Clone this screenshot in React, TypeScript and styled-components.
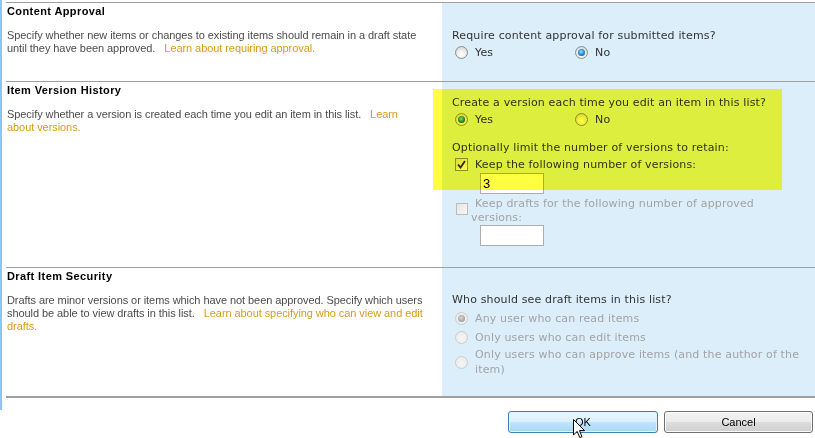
import React from "react";
import styled, { createGlobalStyle, css } from "styled-components";

const GlobalStyle = createGlobalStyle`
  html, body {
    margin: 0;
    padding: 0;
    background: #fff;
  }
  body {
    font-family: "Liberation Sans", Arial, sans-serif;
    font-size: 11px;
  }
`;

const Root = styled.div`
  position: relative;
  width: 815px;
  height: 438px;
  overflow: hidden;
`;

const Page = styled.div`
  border-left: 2px solid #86c6f9;
  padding: 2px 0 12px 4px;
`;

const Sections = styled.div`
  border-bottom: 2px solid #a0a0a0;
`;

const Section = styled.div<{ $h: number }>`
  display: flex;
  border-top: 1px solid #a0a0a0;
  height: ${(p) => p.$h}px;
`;

const Left = styled.div`
  width: 420px;
  padding: 2px 15px 0 1px;
`;

const Title = styled.div`
  font-weight: bold;
  line-height: 13px;
  letter-spacing: 0.4px;
  color: #000;
`;

const Desc = styled.div`
  margin-top: 11px;
  line-height: 13px;
  letter-spacing: -0.07px;
  color: #4c4c4c;
`;

const Link = styled.span`
  color: #d69d19;
`;

const Right = styled.div<{ $pt: number }>`
  flex: 1;
  background: #ddeefb;
  padding: ${(p) => p.$pt}px 0 0 10px;
  font-family: "DejaVu Sans", Verdana, sans-serif;
  font-size: 11px;
  letter-spacing: 0.15px;
  color: #333;
`;

const Question = styled.div<{ $mt?: number }>`
  line-height: 14px;
  margin-top: ${(p) => p.$mt ?? 0}px;
`;

const Options = styled.div`
  display: flex;
  height: 18px;
  align-items: center;
`;

const Option = styled.div`
  display: flex;
  align-items: center;
  width: 120px;
`;

const OptionList = styled.div`
  margin-top: 2px;
  color: #a3a3a3;
`;

const ListOption = styled.div`
  display: flex;
  align-items: center;
  min-height: 19px;
  line-height: 15px;
`;

const OptionText = styled.span`
  max-width: 335px;
`;

const Radio = styled.span<{ $checked?: boolean; $disabled?: boolean }>`
  position: relative;
  flex: none;
  box-sizing: border-box;
  width: 13px;
  height: 13px;
  margin: 0 7px 0 3px;
  border-radius: 50%;
  border: 1px solid ${(p) => (p.$disabled ? "#c9cdd1" : "#8e8f8f")};
  background: ${(p) =>
    p.$disabled
      ? "radial-gradient(circle at 50% 60%, #f6f6f6 0, #e8e8e8 100%)"
      : "radial-gradient(circle at 50% 65%, #ffffff 0, #f0f0f0 40%, #c9c9c9 100%)"};
  ${(p) =>
    p.$checked &&
    css`
      &::after {
        content: "";
        position: absolute;
        left: 2px;
        top: 2px;
        width: 7px;
        height: 7px;
        border-radius: 50%;
        background: ${p.$disabled
          ? "radial-gradient(circle at 45% 40%, #d8d8d8 0, #a8a8a8 60%, #8a8a8a 100%)"
          : "radial-gradient(circle at 45% 40%, #8fe0ff 0, #2a97dc 45%, #0b3b66 100%)"};
      }
    `}
`;

const CheckRow = styled.div`
  display: flex;
  align-items: center;
  height: 18px;
`;

const Checkbox = styled.span<{ $disabled?: boolean }>`
  flex: none;
  box-sizing: border-box;
  display: flex;
  align-items: center;
  justify-content: center;
  width: 13px;
  height: 13px;
  margin: 0 7px 0 3px;
  border: 1px solid ${(p) => (p.$disabled ? "#bcbcbc" : "#8e8f8f")};
  background: ${(p) =>
    p.$disabled
      ? "linear-gradient(135deg, #e6e6e6, #f7f7f7)"
      : "linear-gradient(135deg, #dcdcdc, #ffffff)"};
`;

const DisabledRow = styled.div`
  display: flex;
  align-items: flex-start;
  margin-top: 3px;
  color: #a3a3a3;
`;

const DisabledBox = styled(Checkbox)`
  width: 12px;
  height: 12px;
  margin: 6px 3px 0 4px;
`;

const DisabledLabel = styled.div`
  width: 300px;
  line-height: 14px;
  text-indent: 4px;
`;

const TextBox = styled.input`
  display: block;
  box-sizing: border-box;
  width: 64px;
  height: 21px;
  margin: 0 0 0 28px;
  padding: 0 0 0 2px;
  border: 1px solid #abadb3;
  background: #fff;
  font-family: "Liberation Sans", Arial, sans-serif;
  font-size: 13px;
  color: #000;
  outline: none;
`;

const Highlight = styled.div`
  position: absolute;
  left: 433px;
  top: 89px;
  width: 349px;
  height: 101px;
  background: rgba(255, 255, 0, 0.75);
  mix-blend-mode: multiply;
  pointer-events: none;
`;

const Footer = styled.div`
  display: flex;
  justify-content: flex-end;
  gap: 6px;
  padding: 1px 2px 0 0;
`;

const Button = styled.button<{ $primary?: boolean; $w: number }>`
  width: ${(p) => p.$w}px;
  height: 22px;
  border-radius: 3px;
  font-family: "Liberation Sans", Arial, sans-serif;
  font-size: 11px;
  color: #000;
  padding: 0;
  ${(p) =>
    p.$primary
      ? css`
          border: 1px solid #3c7fb1;
          background: linear-gradient(#eaf6fd 0%, #d9f0fc 50%, #bee6fd 51%, #a7d9f5 100%);
          box-shadow: inset 0 0 0 1px #e4f3fc;
        `
      : css`
          border: 1px solid #707070;
          background: linear-gradient(#f2f2f2 0%, #ebebeb 50%, #dddddd 51%, #cfcfcf 100%);
          box-shadow: inset 0 0 0 1px #fbfbfb;
        `}
`;

const Cursor = styled.svg`
  position: absolute;
  left: 573px;
  top: 419px;
`;

const Check = () => (
  <svg width="9" height="9" viewBox="0 0 9 9">
    <path d="M1 4.5 L3.5 7.5 L8 1" fill="none" stroke="#2b2b2b" strokeWidth="1.8" />
  </svg>
);

const gap = "\u00a0\u00a0 ";

export default function App() {
  return (
    <Root>
      <GlobalStyle />
      <Page>
        <Sections>
          <Section $h={78}>
            <Left>
              <Title>Content Approval</Title>
              <Desc>
                Specify whether new items or changes to existing items should remain in a draft state
                until they have been approved.{gap}
                <Link>Learn about requiring approval.</Link>
              </Desc>
            </Left>
            <Right $pt={26}>
              <Question>Require content approval for submitted items?</Question>
              <Options>
                <Option>
                  <Radio />
                  Yes
                </Option>
                <Option>
                  <Radio $checked />
                  No
                </Option>
              </Options>
            </Right>
          </Section>

          <Section $h={185}>
            <Left>
              <Title>Item Version History</Title>
              <Desc>
                Specify whether a version is created each time you edit an item in this list.{gap}
                <Link>Learn about versions.</Link>
              </Desc>
            </Left>
            <Right $pt={14}>
              <Question>Create a version each time you edit an item in this list?</Question>
              <Options>
                <Option>
                  <Radio $checked />
                  Yes
                </Option>
                <Option>
                  <Radio />
                  No
                </Option>
              </Options>
              <Question $mt={13}>Optionally limit the number of versions to retain:</Question>
              <CheckRow>
                <Checkbox>
                  <Check />
                </Checkbox>
                Keep the following number of versions:
              </CheckRow>
              <TextBox readOnly value="3" />
              <DisabledRow>
                <DisabledBox $disabled />
                <DisabledLabel>Keep drafts for the following number of approved versions:</DisabledLabel>
              </DisabledRow>
              <TextBox readOnly value="" />
            </Right>
          </Section>

          <Section $h={128}>
            <Left>
              <Title>Draft Item Security</Title>
              <Desc>
                Drafts are minor versions or items which have not been approved. Specify which users
                should be able to view drafts in this list.{gap}
                <Link>Learn about specifying who can view and edit drafts.</Link>
              </Desc>
            </Left>
            <Right $pt={25}>
              <Question>Who should see draft items in this list?</Question>
              <OptionList>
                <ListOption>
                  <Radio $checked $disabled />
                  <OptionText>Any user who can read items</OptionText>
                </ListOption>
                <ListOption>
                  <Radio $disabled />
                  <OptionText>Only users who can edit items</OptionText>
                </ListOption>
                <ListOption>
                  <Radio $disabled />
                  <OptionText>Only users who can approve items (and the author of the item)</OptionText>
                </ListOption>
              </OptionList>
            </Right>
          </Section>
        </Sections>
      </Page>
      <Footer>
        <Button $primary $w={150}>OK</Button>
        <Button $w={149}>Cancel</Button>
      </Footer>
      <Highlight />
      <Cursor width="13" height="20" viewBox="0 0 13 20">
        <path
          d="M0.5 0.5 L0.5 16 L4.2 12.4 L6.8 18.6 L9 17.7 L6.5 11.6 L11.5 11.6 Z"
          fill="#fff"
          stroke="#000"
          strokeWidth="1"
          strokeLinejoin="miter"
        />
      </Cursor>
    </Root>
  );
}
